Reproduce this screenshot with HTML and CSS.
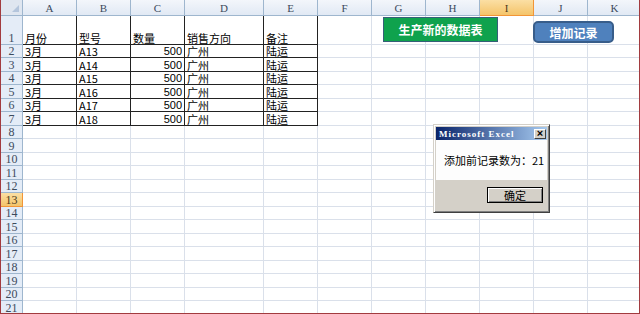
FILE: index.html
```html
<html lang="zh-CN">
<head>
    <meta charset="UTF-8">
    <meta name="viewport" content="width=device-width, initial-scale=1.0">
    <title>Excel</title>

    <link rel="stylesheet" href="styles.css">

</head>
<body>
    <div class="window">
        <div class="sheet"></div>

        <button class="shape-btn btn-green">生产新的数据表</button>
        <button class="shape-btn btn-blue">增加记录</button>

        <div class="msgbox">
            <div class="msgbox-title">
                <span class="msgbox-caption">Microsoft Excel</span>
                <span class="msgbox-close">×</span>
            </div>
            <div class="msgbox-body">添加前记录数为：21</div>
            <div class="msgbox-footer">
                <button class="msgbox-ok">确定</button>
            </div>
        </div>
    </div>
    <script>
        let columns = ['A', 'B', 'C', 'D', 'E', 'F', 'G', 'H', 'I', 'J', 'K'];
        let totalRows = 21;
        let activeRow = 13;
        let activeCol = 'I';
        let data = [
            ['月份', '型号', '数量', '销售方向', '备注'],
            ['3月', 'A13', 500, '广州', '陆运'],
            ['3月', 'A14', 500, '广州', '陆运'],
            ['3月', 'A15', 500, '广州', '陆运'],
            ['3月', 'A16', 500, '广州', '陆运'],
            ['3月', 'A17', 500, '广州', '陆运'],
            ['3月', 'A18', 500, '广州', '陆运'],
        ];

        let sheet = document.body.querySelector('.sheet');
        let html = '<div class="corner"></div>';
        columns.forEach(col => {
            let cls = col == activeCol ? 'col-head active' : 'col-head';
            html += `<div class="${cls}">${col}</div>`;
        })
        for (let r = 1; r <= totalRows; r++) {
            let cls = r == activeRow ? 'row-head active' : 'row-head';
            html += `<div class="${cls}">${r}</div>`;
            columns.forEach((col, c) => {
                let row = data[r - 1];
                let value = row && c < row.length ? row[c] : '';
                let classes = ['cell'];
                if (row && c < row.length) classes.push('boxed');
                if (typeof value == 'number') classes.push('num');
                html += `<div class="${classes.join(' ')}">${value}</div>`;
            })
        }
        sheet.innerHTML = html;
    </script>
</body>
</html>
```

FILE: styles.css
```css
body {
    margin: 0px;
    font-family: "Noto Sans CJK SC", "Liberation Sans", sans-serif;
}

.window {
    position: relative;
    width: 640px;
    height: 314px;
    box-sizing: border-box;
    border: 1px solid #a23b3f;
    border-top: none;
    overflow: hidden;
    background-color: white;
}

.sheet {
    display: grid;
    grid-template-columns: 22px 54px 54px 54px 79px 54px 54px 54px 54px 54px 54px 54px;
    grid-template-rows: 16px 29px repeat(10, 13px 14px);
}

.corner, .col-head, .row-head {
    box-sizing: border-box;
    background: linear-gradient(#f3f6fb, #e1e9f4);
    border-right: 1px solid #9eb6ce;
    border-bottom: 1px solid #9eb6ce;
    font-family: "Liberation Serif", serif;
    font-size: 11px;
    color: #3c4a5c;
    display: flex;
    align-items: center;
    justify-content: center;
}
.row-head {
    background: #e4ecf7;
    font-size: 12px;
    align-items: flex-end;
    line-height: 12px;
}
.corner {
    position: relative;
    background: #dfe6f0;
}
.corner::after {
    content: "";
    position: absolute;
    right: 3px;
    bottom: 3px;
    border-left: 7px solid transparent;
    border-bottom: 7px solid #b4c5dc;
}
.col-head.active, .row-head.active {
    background: linear-gradient(#fbdfa4, #f4c46a);
    border-right-color: #f29536;
    border-bottom-color: #f29536;
    color: #4a3a1c;
}

.cell {
    box-sizing: border-box;
    border-right: 1px solid #dae0ea;
    border-bottom: 1px solid #dae0ea;
    font-size: 11px;
    line-height: 12px;
    color: black;
    padding: 0px 2px;
    white-space: nowrap;
    display: flex;
    align-items: flex-end;
}
.cell.boxed {
    border-right-color: #222;
    border-bottom-color: #222;
}
.cell.num {
    justify-content: flex-end;
    font-family: "Liberation Sans", sans-serif;
}

.shape-btn {
    position: absolute;
    box-sizing: border-box;
    padding: 0px;
    color: white;
    font-family: "Noto Sans CJK SC", sans-serif;
    font-weight: bold;
    font-size: 12px;
}
.btn-green {
    left: 382px;
    top: 17px;
    width: 115px;
    height: 25px;
    background-color: #0fa24d;
    border: 1px solid #365f78;
}
.btn-blue {
    left: 532px;
    top: 21px;
    width: 81px;
    height: 22px;
    background-color: #4f81bd;
    border: 2px solid #385d8a;
    border-radius: 5px;
}

.msgbox {
    position: absolute;
    left: 432px;
    top: 124px;
    width: 117px;
    height: 89px;
    box-sizing: border-box;
    background-color: #d4d0c8;
    border: 1px solid #d4d0c8;
    border-right-color: #404040;
    border-bottom-color: #404040;
    box-shadow: inset 1px 1px 0px white, inset -1px -1px 0px #808080;
    padding: 2px;
    display: flex;
    flex-direction: column;
}
.msgbox-title {
    height: 13px;
    background: linear-gradient(to right, #0a246a, #a6caf0);
    display: flex;
    align-items: center;
    justify-content: space-between;
    padding: 0px 1px 0px 3px;
}
.msgbox-caption {
    color: white;
    font-family: "Liberation Serif", serif;
    font-weight: bold;
    font-size: 9px;
    letter-spacing: 1px;
}
.msgbox-close {
    width: 12px;
    height: 10px;
    box-sizing: border-box;
    background-color: #d4d0c8;
    border: 1px solid white;
    border-right-color: #404040;
    border-bottom-color: #404040;
    font-family: "Liberation Sans", sans-serif;
    font-weight: bold;
    font-size: 11px;
    line-height: 7px;
    text-align: center;
    color: black;
}
.msgbox-body {
    background-color: #fdfdfd;
    height: 40px;
    box-sizing: border-box;
    padding: 14px 0px 0px 8px;
    font-size: 11px;
    line-height: 13px;
    color: black;
}
.msgbox-footer {
    flex: 1;
    display: flex;
    align-items: center;
    justify-content: flex-end;
    padding-right: 4px;
}
.msgbox-ok {
    width: 56px;
    height: 16px;
    box-sizing: border-box;
    padding: 0px;
    background-color: #d4d0c8;
    border: 1px solid black;
    box-shadow: inset 1px 1px 0px white, inset -1px -1px 0px #808080;
    font-family: "Noto Sans CJK SC", sans-serif;
    font-size: 11px;
    line-height: 12px;
    color: black;
}
```
